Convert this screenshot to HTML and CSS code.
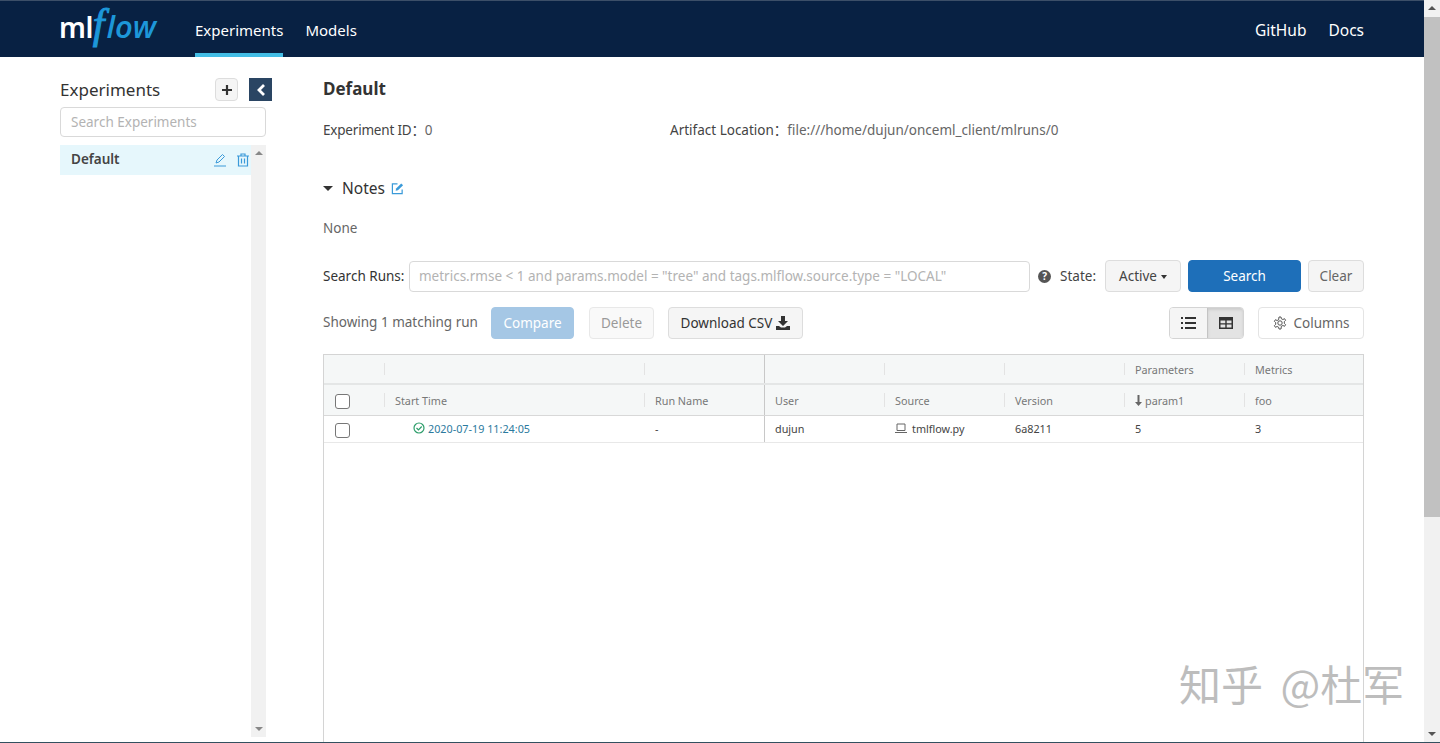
FILE: index.html
```html
<!DOCTYPE html>
<html lang="en">
<head>
<meta charset="utf-8">
<title>MLflow</title>
<link rel="stylesheet" href="styles.css">
</head>
<body>
<div class="page">
  <header class="topbar">
    <div class="logo"><span class="logo-ml">ml</span><span class="logo-flow"><span class="logo-f">f</span>low</span></div>
    <nav class="nav">
      <a class="nav-link active">Experiments</a>
      <a class="nav-link">Models</a>
    </nav>
    <nav class="nav-right">
      <a class="nav-link">GitHub</a>
      <a class="nav-link">Docs</a>
    </nav>
  </header>
  <div class="content">
    <aside class="sidebar">
      <div class="side-head">
        <span class="side-title">Experiments</span>
        <button class="add-btn"><svg width="12" height="12" viewBox="0 0 12 12"><path d="M6 1v10M1 6h10" stroke="#333" stroke-width="2.200"/></svg></button>
        <button class="collapse-btn"><svg width="10" height="14" viewBox="0 0 10 14"><path d="M8 2L3 7l5 5" fill="none" stroke="#fff" stroke-width="2.800"/></svg></button>
      </div>
      <div class="side-search">Search Experiments</div>
      <div class="side-list">
        <div class="side-items">
          <div class="side-item">
            <span class="side-item-name">Default</span>
            <svg class="pencil" width="14" height="14" viewBox="0 0 14 14"><path d="M1 13h12M3 10l1-3 5.500-5.500 2 2L6 9z" fill="none" stroke="#3a9ad9" stroke-width="1"/></svg>
            <svg class="trash" width="14" height="14" viewBox="0 0 14 14"><path d="M1 3h12M5 3V1h4v2M2.500 3v10h9V3M5.500 5.500v5M8.500 5.500v5" fill="none" stroke="#3a9ad9" stroke-width="1.200"/></svg>
          </div>
        </div>
        <div class="side-scroll">
          <span class="arrow-up small"></span>
          <span class="arrow-down small"></span>
        </div>
      </div>
    </aside>
    <main class="main">
      <h1 class="title">Default</h1>
      <div class="meta">
        <span class="meta-id">Experiment ID：<span class="meta-val">0</span></span>
        <span class="meta-loc">Artifact Location：<span class="meta-val">file:///home/dujun/onceml_client/mlruns/0</span></span>
      </div>
      <div class="notes">
        <span class="caret-down"></span>
        <span class="notes-label">Notes</span>
        <svg width="13" height="13" viewBox="0 0 14 14"><path d="M12 8v4.500H1.500V2H7" fill="none" stroke="#3a9ad9" stroke-width="1.300"/><path d="M5 9.500l.5-2.500L11 1.500l2 2L7.500 9z" fill="#3a9ad9"/></svg>
      </div>
      <div class="none">None</div>
      <div class="search-row">
        <label class="search-label">Search Runs:</label>
        <div class="search-input">metrics.rmse &lt; 1 and params.model = "tree" and tags.mlflow.source.type = "LOCAL"</div>
        <span class="help">?</span>
        <label class="state-label">State:</label>
        <button class="btn btn-active">Active <span class="caret-small"></span></button>
        <button class="btn btn-search">Search</button>
        <button class="btn btn-clear">Clear</button>
      </div>
      <div class="action-row">
        <span class="match">Showing 1 matching run</span>
        <button class="btn btn-compare">Compare</button>
        <button class="btn btn-delete">Delete</button>
        <button class="btn btn-csv">Download CSV <svg width="14" height="14" viewBox="0 0 14 14"><path d="M5 0h4v5h3L7 10 2 5h3z" fill="#333"/><path d="M0 10h3l2 1.500h4L11 10h3v4H0z" fill="#333"/></svg></button>
        <div class="view-toggle">
          <button class="view-btn"><svg width="15" height="12" viewBox="0 0 15 12"><path d="M0 0h2v2H0zM0 5h2v2H0zM0 10h2v2H0zM4 0h11v2H4zM4 5h11v2H4zM4 10h11v2H4z" fill="#333"/></svg></button>
          <button class="view-btn on"><svg width="14" height="12" viewBox="0 0 14 12"><path fill-rule="evenodd" d="M0 0h14v12H0zM1.500 3.500v2.700h4.800V3.500zM7.700 3.500v2.700h4.800V3.500zM1.500 7.500v3h4.800v-3zM7.700 7.500v3h4.800v-3z" fill="#333"/></svg></button>
        </div>
        <button class="btn btn-columns"><svg width="14" height="14" viewBox="0 0 14 14"><circle cx="7" cy="7" r="2.200" fill="none" stroke="#555"/><path d="M6 1h2l.4 1.800 1.500.7 1.700-.8 1 1.700-1.300 1.200v1.800l1.300 1.200-1 1.700-1.700-.8-1.500.7L8 13H6l-.4-1.800-1.500-.7-1.700.8-1-1.700 1.300-1.200V6.600L1.400 5.400l1-1.700 1.700.8 1.500-.7z" fill="none" stroke="#555"/></svg> Columns</button>
      </div>
      <div class="table">
        <div class="tr tr-group">
          <div class="td c1"></div>
          <div class="td sep"></div>
          <div class="td sep"></div>
          <div class="td strong"></div>
          <div class="td sep"></div>
          <div class="td sep"></div>
          <div class="td sep">Parameters</div>
          <div class="td sep">Metrics</div>
        </div>
        <div class="tr tr-head">
          <div class="td c1"><span class="check"></span></div>
          <div class="td sep">Start Time</div>
          <div class="td sep">Run Name</div>
          <div class="td strong">User</div>
          <div class="td sep">Source</div>
          <div class="td sep">Version</div>
          <div class="td sep"><svg class="sort" width="7" height="11" viewBox="0 0 7 11"><path d="M2.500 0h2v7H7L3.500 11 0 7h2.500z" fill="#666"/></svg>param1</div>
          <div class="td sep">foo</div>
        </div>
        <div class="tr tr-body">
          <div class="td c1"><span class="check"></span></div>
          <div class="td start"><svg width="12" height="12" viewBox="0 0 12 12"><circle cx="6" cy="6" r="5" fill="none" stroke="#2e9e6b" stroke-width="1.200"/><path d="M3.500 6l2 2 3.200-3.500" fill="none" stroke="#2e9e6b" stroke-width="1.200"/></svg><a class="run-link">2020-07-19 11:24:05</a></div>
          <div class="td">-</div>
          <div class="td strong">dujun</div>
          <div class="td src"><svg width="12" height="11" viewBox="0 0 12 11"><path d="M2 1h8v6.500H2zM0 9.500h12" fill="none" stroke="#666"/></svg> tmlflow.py</div>
          <div class="td">6a8211</div>
          <div class="td">5</div>
          <div class="td">3</div>
        </div>
      </div>
    </main>
  </div>
  <div class="watermark">知乎 @杜军</div>
  <span class="bottom-mark"></span>
</div>
<div class="scrollbar">
  <span class="arrow-up"></span>
  <div class="thumb"></div>
  <span class="arrow-down"></span>
</div>
</body>
</html>
```
FILE: styles.css
```css
* { box-sizing: border-box; }
html, body { margin: 0; height: 743px; overflow: hidden; }
body {
  display: flex;
  font-family: "Noto Sans", "Open Sans", "Noto Sans CJK SC", sans-serif;
  font-size: 13.5px;
  color: #333;
  background: #fff;
  border-bottom: 1px solid #33505f;
}
button { font-family: inherit; }

.page { position: relative; flex: 1; min-width: 0; display: flex; flex-direction: column; }

.topbar {
  height: 57px;
  flex: none;
  display: flex;
  align-items: stretch;
  padding: 0 59px 0 59px;
  background: #082143;
  border-top: 1px solid #3c4f68;
}
.logo { width: 136px; display: flex; align-items: baseline; padding-top: 3px; line-height: 40px; white-space: nowrap; }
.logo-ml { font-size: 28px; font-weight: 600; color: #fff; letter-spacing: -0.5px; }
.logo-flow { font-family: "Open Sans", sans-serif; font-style: italic; font-weight: 600; font-size: 31px; color: #1d97d9; }
.logo-f { font-family: "Liberation Serif", serif; font-size: 42px; font-weight: 400; -webkit-text-stroke: 1px #1d97d9; margin-right: 2px; }
.nav, .nav-right { display: flex; gap: 22px; }
.nav-right { margin-left: auto; margin-right: 1px; }
.nav-right .nav-link { font-size: 15.500px; }
.nav-link {
  display: flex;
  align-items: center;
  height: 56px;
  font-size: 15px;
  color: #fff;
  padding-top: 6px;
  border-bottom: 4px solid transparent;
}
.nav-link.active { border-bottom-color: #43bde5; }

.content { flex: 1; min-height: 0; display: flex; }

.sidebar { width: 323px; flex: none; padding: 21px 57px 5px 60px; display: flex; flex-direction: column; }
.side-head { position: relative; display: flex; align-items: center; height: 29px; margin-right: -6px; }
.side-title { font-size: 17px; color: #333; flex: 1; position: relative; top: -3px; }
.add-btn {
  width: 23px; height: 23px; padding: 0; margin-right: 11px; margin-top: -6px;
  display: flex; align-items: center; justify-content: center;
  background: #f5f5f5; border: 1px solid #ddd; border-radius: 4px;
}
.collapse-btn {
  width: 23px; height: 23px; padding: 0; margin-top: -6px;
  display: flex; align-items: center; justify-content: center;
  background: #2a4563; border: 0;
}
.side-search {
  height: 30px; padding: 0 10px 1px;
  display: flex; align-items: center;
  color: #b3b3b3;
  border: 1px solid #d9d9d9; border-radius: 4px;
}
.side-list { flex: 1; min-height: 0; display: flex; margin-top: 8px; }
.side-items { flex: 1; }
.side-item {
  height: 30px; padding: 0 1px 2px 11px;
  display: flex; align-items: center;
  background: #e6f7fc;
}
.side-item-name { flex: 1; font-weight: 600; color: #444; }
.pencil, .trash { margin-top: 2px; }
.pencil { margin-right: 9px; }
.side-scroll {
  width: 15px; background: #f1f1f1;
  display: flex; flex-direction: column; justify-content: space-between; align-items: center;
  padding: 6px 0;
}

.arrow-up, .arrow-down { display: block; width: 0; height: 0; border-left: 4px solid transparent; border-right: 4px solid transparent; }
.arrow-up { border-bottom: 4px solid #555; }
.arrow-down { border-top: 4px solid #555; }
.arrow-up.small { border-bottom-color: #888; }
.arrow-down.small { border-top-color: #888; }

.main { flex: 1; min-width: 0; padding-right: 60px; display: flex; flex-direction: column; }
.title { margin: 19px 0 0; font-size: 17px; font-weight: 700; line-height: 25px; color: #333; }
.meta { display: flex; margin-top: 19px; line-height: 20px; color: #444; }
.meta-id { width: 347px; letter-spacing: -0.2px; }
.meta-val { color: #666; }
.notes { display: flex; align-items: center; height: 24px; margin-top: 36px; }
.caret-down { width: 0; height: 0; border-left: 5px solid transparent; border-right: 5px solid transparent; border-top: 5px solid #333; }
.notes-label { font-size: 15.500px; margin-left: 9px; margin-right: 6px; color: #333; }
.none { margin-top: 17px; line-height: 22px; color: #666; }
.search-row { display: flex; align-items: center; height: 32px; margin-top: 21px; }
.search-label { width: 86px; flex: none; color: #333; padding-bottom: 1px; }
.search-input {
  flex: 1; min-width: 0; height: 31px; margin-top: 1px; padding: 0 9px 2px;
  display: flex; align-items: center;
  color: #b3b3b3; white-space: nowrap;
  border: 1px solid #d9d9d9; border-radius: 4px;
}
.help {
  width: 13px; height: 13px; margin-left: 8px; flex: none;
  display: flex; align-items: center; justify-content: center;
  border-radius: 50%; background: #555; color: #fff; font-size: 10px; font-weight: 700;
}
.state-label { margin-left: 9px; margin-right: 9px; color: #444; padding-bottom: 1px; }
.btn {
  height: 32px; padding: 0 0 1px; font-size: 13.500px; color: #444;
  display: flex; align-items: center; justify-content: center;
  background: #f5f5f5; border: 1px solid #ddd; border-radius: 4px;
}
.btn-active { width: 76px; gap: 4px; }
.caret-small { width: 0; height: 0; border-left: 3.500px solid transparent; border-right: 3.500px solid transparent; border-top: 4px solid #333; margin-top: 2px; }
.btn-search { width: 113px; margin-left: 7px; background: #1e6fb9; border-color: #1e6fb9; color: #fff; }
.btn-clear { width: 56px; margin-left: 7px; color: #666; }
.action-row { display: flex; align-items: center; height: 32px; margin-top: 15px; }
.match { width: 168px; flex: none; color: #666; padding-bottom: 3px; }
.btn-compare { width: 83px; background: #a5c7e5; border-color: #a5c7e5; color: #fff; }
.btn-delete { width: 65px; margin-left: 15px; color: #999; background: #f9f9f9; border-color: #e8e8e8; }
.btn-csv { width: 135px; margin-left: 14px; gap: 4px; color: #333; }
.view-toggle { margin-left: auto; display: flex; border: 1px solid #d4d4d4; border-radius: 4px; height: 32px; overflow: hidden; }
.view-btn { width: 37px; padding: 0; border: 0; background: #f5f5f5; display: flex; align-items: center; justify-content: center; }
.view-btn.on { background: #e3e3e3; border-left: 1px solid #c4c4c4; width: 36px; box-shadow: inset 0 2px 3px rgba(0,0,0,.1); }
.btn-columns { width: 106px; margin-left: 14px; gap: 7px; background: #fff; border-color: #e4e4e4; color: #666; }

.table { flex: 1; margin-top: 15px; min-height: 0; border: 1px solid #d4d4d4; border-bottom: 0; }
.tr {
  display: grid;
  grid-template-columns: 60px 260px 120px 120px 120px 120px 120px 1fr;
  font-size: 10.800px;
  color: #777;
}
.tr-group { height: 30px; background: #f5f7f7; border-bottom: 2px solid #e4e6e6; }
.tr-head { height: 31px; background: #f5f7f7; border-bottom: 1px solid #d8d8d8; }
.tr-body { height: 27px; border-bottom: 1px solid #e8e8e8; color: #444; }
.td { display: flex; align-items: center; padding-left: 11px; position: relative; }
.tr-body .td { padding-bottom: 2px; }
.sep::before {
  content: "";
  position: absolute; left: 0; top: 8px; bottom: 8px;
  width: 1px; background: #e3e3e3;
}
.strong { border-left: 1px solid #c8c8c8; padding-left: 10px; }
.td.c1 { padding-top: 2px; padding-bottom: 0; }
.check { width: 15px; height: 15px; border: 1px solid #777; border-radius: 3px; background: #fff; }
.start { padding-left: 29px; gap: 3px; }
.run-link { color: #2b7a9e; }
.src { gap: 5px; }
.sort { margin-right: 3px; }

.watermark {
  position: absolute; left: 1179px; top: 655px;
  font-family: "Noto Sans CJK SC", sans-serif;
  font-size: 42px; line-height: 56px; white-space: nowrap;
  word-spacing: 8px;
  color: #bdbdbd;
  text-shadow: 1px 1px 0 #fff;
}
.bottom-mark { position: absolute; left: 183px; bottom: -1px; width: 47px; height: 1px; background: #4f93b5; }

.scrollbar {
  width: 16px; flex: none; background: #f1f1f1;
  display: flex; flex-direction: column; align-items: center;
  padding: 6px 0 6px;
}
.thumb { width: 16px; height: 500px; margin-top: 7px; background: #c1c1c1; }
.scrollbar .arrow-down { margin-top: auto; }
```
